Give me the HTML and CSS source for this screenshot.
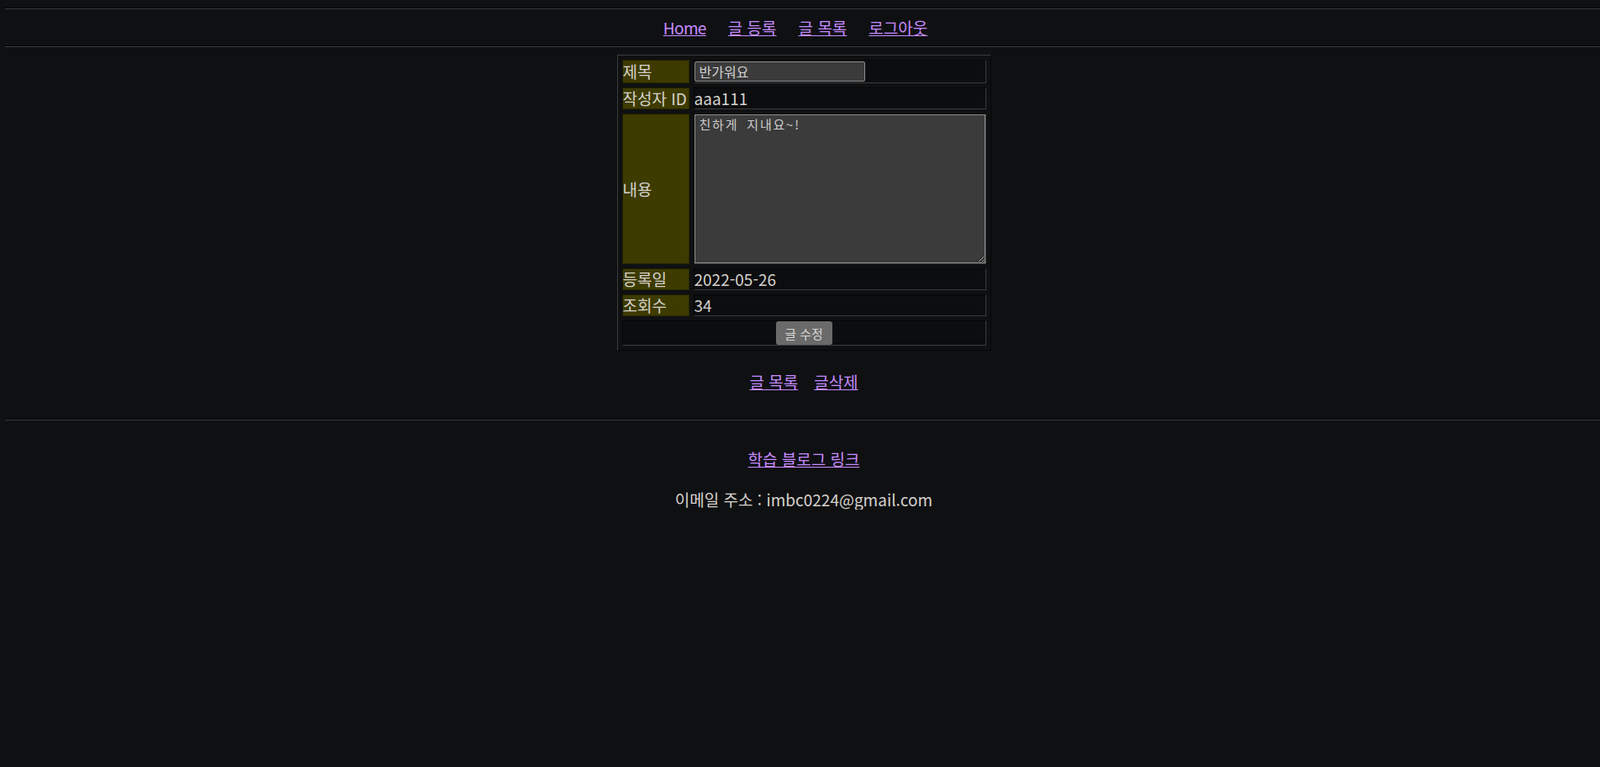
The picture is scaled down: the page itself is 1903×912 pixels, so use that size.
FILE: index.html
```html
<!DOCTYPE html>
<html lang="ko">
    <head>
        <meta charset="UTF-8" />
        <meta name="viewport" content="width=device-width, initial-scale=1.0" />
        <title>글 상세</title>
        <link rel="stylesheet" href="styles.css">
    </head>
    <body>
        <div class="page">
            <hr class="rule">
            <nav class="top-nav">
                <a href="#">Home</a>
                <a href="#">글 등록</a>
                <a href="#">글 목록</a>
                <a href="#">로그아웃</a>
            </nav>
            <hr class="rule">

            <form class="post-form">
                <table class="post">
                    <tr>
                        <td class="label">제목</td>
                        <td class="value"><input class="title-input" type="text" value="반가워요"></td>
                    </tr>
                    <tr>
                        <td class="label">작성자 ID</td>
                        <td class="value">aaa111</td>
                    </tr>
                    <tr>
                        <td class="label">내용</td>
                        <td class="value"><textarea class="content-input">친하게 지내요~!</textarea></td>
                    </tr>
                    <tr>
                        <td class="label">등록일</td>
                        <td class="value">2022-05-26</td>
                    </tr>
                    <tr>
                        <td class="label">조회수</td>
                        <td class="value">34</td>
                    </tr>
                    <tr>
                        <td class="value actions" colspan="2"><button class="submit-btn" type="button">글 수정</button></td>
                    </tr>
                </table>
            </form>

            <div class="post-links">
                <a href="#">글 목록</a>
                <a href="#">글삭제</a>
            </div>

            <hr class="rule footer-rule">

            <footer class="footer">
                <p class="blog-link"><a href="#">학습 블로그 링크</a></p>
                <p class="email">이메일 주소 : imbc0224@gmail.com</p>
            </footer>
        </div>
    </body>
</html>
```

FILE: styles.css
```css
* {
    box-sizing: border-box;
}

html {
    overflow-x: hidden;
}

body {
    margin: 0;
    padding-top: 9px;
    background: #0f1012;
    color: #d6d2cc;
    font-family: "Noto Sans CJK KR", "Noto Sans", sans-serif;
    font-size: 19px;
    line-height: 24px;
}

.page {
    margin: 0 -3px 0 6px;
}

a {
    color: #c78bff;
    text-decoration: underline;
}

.rule {
    height: 2px;
    margin: 0;
    border: none;
    border-top: 1px solid #050505;
    border-bottom: 1px solid #3c3d3f;
}

.top-nav {
    display: flex;
    justify-content: center;
    gap: 26px;
    padding: 10px 20px 9px 0;
}

.top-nav a:first-child {
    letter-spacing: -0.6px;
}

/* form table */

.post {
    margin: 9px auto 0;
    border-collapse: separate;
    border-spacing: 5px;
    border: 1px solid;
    border-color: #3a3b3d #060606 #060606 #3a3b3d;
}

.post td {
    padding: 0;
    border: 1px solid;
    border-color: #050505 #3a3b3d #3a3b3d #050505;
    vertical-align: middle;
    white-space: nowrap;
}

.label {
    width: 80px;
    background: #3d3b00;
    border-color: #1c1b00 #2a2900 #2a2900 #1c1b00 !important;
}

.value {
    width: 346px;
    background: #0c0d0e;
}

.title-input {
    display: block;
    width: 203px;
    height: 24px;
    margin: 1px 0;
    padding: 0 5px;
    background: #3b3b3b;
    color: #d2d2d2;
    border: 1px solid #8a8a8a;
    border-radius: 2px;
    font-family: inherit;
    font-size: 16px;
}

.content-input {
    display: block;
    width: 346px;
    height: 177px;
    margin: 0;
    padding: 2px 5px;
    background: #3b3b3b;
    color: #cdcdcd;
    border: 1px solid #8f8f8f;
    font-family: inherit;
    font-size: 15px;
    line-height: 18px;
    letter-spacing: 1.8px;
    word-spacing: 4px;
}

.actions {
    text-align: center;
}

.submit-btn {
    display: block;
    width: 67px;
    height: 28px;
    margin: 0 auto;
    padding: 0;
    background: #6a6a6a;
    color: #d6d6d6;
    border: none;
    border-radius: 3px;
    font-family: inherit;
    font-size: 15px;
}

/* links under the table */

.post-links {
    display: flex;
    justify-content: center;
    gap: 19px;
    margin-top: 25px;
}

.footer-rule {
    margin-top: 32px;
}

.footer {
    text-align: center;
}

.blog-link {
    margin: 34px 0 0;
}

.email {
    margin: 24px 0 0;
}
```
